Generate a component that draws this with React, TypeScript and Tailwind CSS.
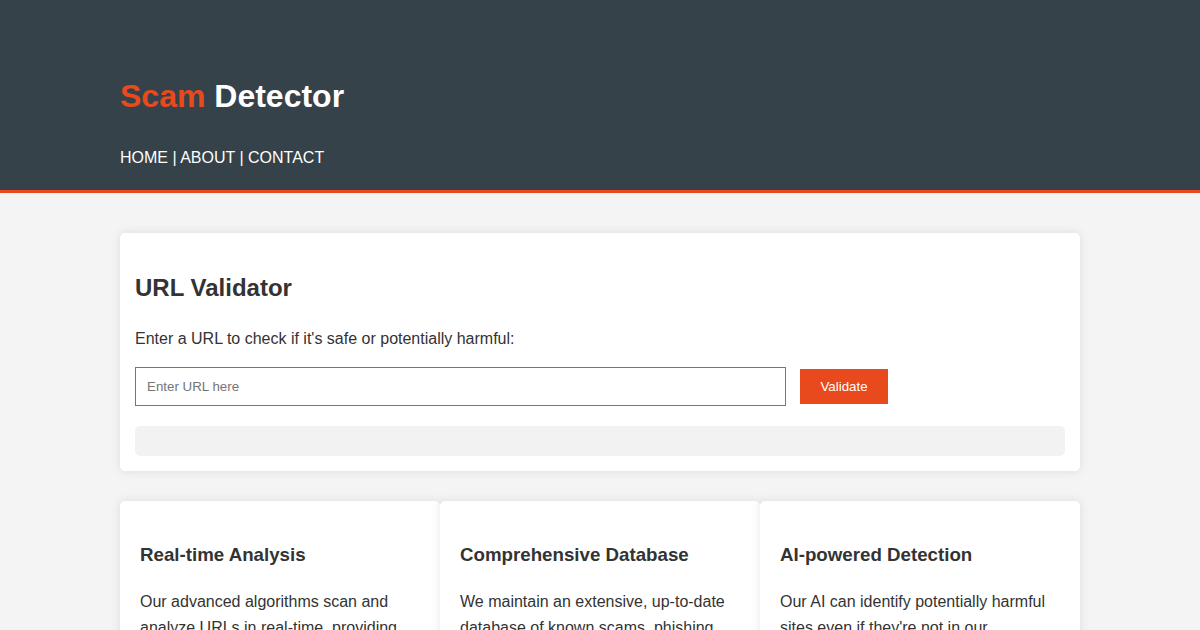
import React from "react";

export default function App() {
  const font = { fontFamily: '"Liberation Sans", Arial, sans-serif' };
  return (
    <div className="min-h-[630px] bg-[#f4f4f4] text-[#333]" style={font}>
      <header className="bg-[#35424a] border-b-[3px] border-[#e8491d] pt-[78px] pb-[23px]">
        <div className="w-[960px] mx-auto">
          <h1 className="text-[32px] font-bold leading-[37px] text-white">
            <span className="text-[#e8491d]">Scam</span> Detector
          </h1>
          <nav className="mt-[34px] text-[16px] leading-[18px] text-white">
            HOME | ABOUT | CONTACT
          </nav>
        </div>
      </header>
      <main className="w-[960px] mx-auto pt-[40px]">
        <section className="bg-white rounded-[5px] shadow-[0_0_10px_rgba(0,0,0,0.1)] p-[15px]">
          <h2 className="mt-[26px] text-[24px] font-bold leading-[28px]">URL Validator</h2>
          <p className="mt-[28px] text-[16px] leading-[18px]">
            Enter a URL to check if it's safe or potentially harmful:
          </p>
          <div className="mt-[19px] flex items-center">
            <input
              type="text"
              placeholder="Enter URL here"
              className="w-[651px] h-[39px] border border-[#767676] px-[11px] text-[13.33px] placeholder:text-[#757575] outline-none"
              style={font}
            />
            <button
              className="ml-[14px] w-[88px] h-[35px] bg-[#e8491d] text-white text-[13.33px]"
              style={font}
            >
              Validate
            </button>
          </div>
          <div className="mt-[20px] h-[30px] rounded-[5px] bg-[#f2f2f2]"></div>
        </section>
        <div className="mt-[30px] grid grid-cols-3">
          {[
            {
              t: "Real-time Analysis",
              d: "Our advanced algorithms scan and analyze URLs in real-time, providing instant feedback on potential threats.",
            },
            {
              t: "Comprehensive Database",
              d: "We maintain an extensive, up-to-date database of known scams, phishing sites, and malicious domains.",
            },
            {
              t: "AI-powered Detection",
              d: "Our AI can identify potentially harmful sites even if they're not in our comprehensive database yet.",
            },
          ].map((f) => (
            <div
              key={f.t}
              className="bg-white rounded-[5px] shadow-[0_0_10px_rgba(0,0,0,0.1)] p-[20px]"
            >
              <h3 className="mt-[23px] text-[18.72px] font-bold leading-[22px]">{f.t}</h3>
              <p className="mt-[23px] text-[16px] leading-[25.6px]">{f.d}</p>
            </div>
          ))}
        </div>
      </main>
    </div>
  );
}
